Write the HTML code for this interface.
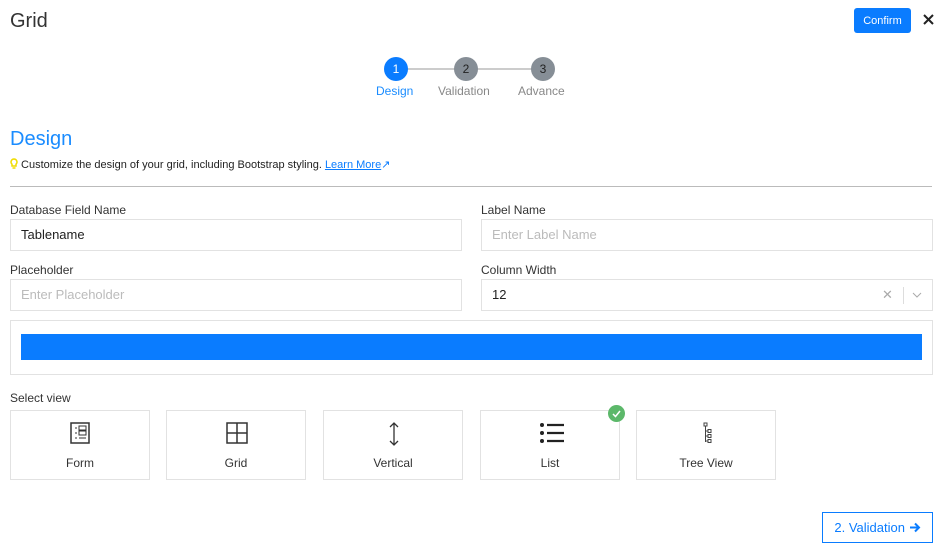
<!DOCTYPE html>
<html><head><meta charset="utf-8"><style>
*{box-sizing:border-box;margin:0;padding:0}
body{width:942px;height:551px;background:#fff;font-family:"Liberation Sans",sans-serif;color:#222;position:relative;overflow:hidden}
.a{position:absolute}
.lbl{font-size:12px;color:#333}
.inp{position:absolute;border:1px solid #e2e2e2;height:32px;font-size:13px;padding-left:10px;line-height:30px}
.ph{color:#bbb}
.circ{position:absolute;width:24px;height:24px;border-radius:50%;color:#fff;font-size:12px;text-align:center;line-height:24px;top:57px}
.step{position:absolute;top:84px;font-size:12px;color:#888}
.card{position:absolute;top:410px;width:140px;height:70px;border:1px solid #e2e2e2;text-align:center;font-size:12px;color:#333}
.card svg{position:absolute;left:58px;top:10px}
.card span{position:absolute;left:0;right:0;top:45px}
</style></head><body>
<div class="a" style="left:10px;top:10px;font-size:20px;color:#333">Grid</div>
<div class="a" style="left:854px;top:8px;width:57px;height:25px;background:#0a7cff;border-radius:3px;color:#fff;font-size:11px;text-align:center;line-height:26px">Confirm</div>
<svg class="a" style="left:923px;top:14px" width="11" height="11"><path d="M1 1L10 10M10 1L1 10" stroke="#222" stroke-width="2"/></svg>

<div class="a" style="left:406px;top:68px;width:126px;height:2px;background:#ccc"></div>
<div class="circ" style="left:384px;background:#0a7cff">1</div>
<div class="circ" style="left:454px;background:#868e96;color:#222">2</div>
<div class="circ" style="left:531px;background:#868e96;color:#222">3</div>
<div class="step" style="left:376px;color:#1a8cff">Design</div>
<div class="step" style="left:438px">Validation</div>
<div class="step" style="left:518px">Advance</div>

<div class="a" style="left:10px;top:128px;font-size:20px;color:#1a8cff">Design</div>
<div class="a" style="left:10px;top:158px;font-size:11px;color:#222"><svg width="8" height="11" style="vertical-align:-1px"><path d="M4 1a3 3 0 0 0-2 5.2V8h4V6.2A3 3 0 0 0 4 1zM2.5 10h3" stroke="#f0dc00" stroke-width="1.5" fill="none"/></svg> Customize the design of your grid, including Bootstrap styling. <span style="color:#0a7cff;text-decoration:underline">Learn More</span><span style="color:#0a7cff">&#8599;</span></div>
<div class="a" style="left:10px;top:186px;width:922px;height:1px;background:#bbb"></div>

<div class="a lbl" style="left:10px;top:203px">Database Field Name</div>
<div class="a lbl" style="left:481px;top:203px">Label Name</div>
<div class="inp" style="left:10px;top:219px;width:452px;color:#222">Tablename</div>
<div class="inp ph" style="left:481px;top:219px;width:452px">Enter Label Name</div>
<div class="a lbl" style="left:10px;top:263px">Placeholder</div>
<div class="a lbl" style="left:481px;top:263px">Column Width</div>
<div class="inp ph" style="left:10px;top:279px;width:452px">Enter Placeholder</div>
<div class="inp" style="left:481px;top:279px;width:452px;color:#222">12
<span class="a" style="left:400px;top:0;color:#aaa;font-size:13px">&#x2715;</span>
<span class="a" style="left:421px;top:7px;width:1px;height:17px;background:#ddd"></span>
<svg class="a" style="left:430px;top:12px" width="10" height="7"><path d="M1 1L5 5L9 1" stroke="#aaa" fill="none"/></svg></div>

<div class="a" style="left:10px;top:320px;width:923px;height:55px;border:1px solid #e2e2e2"></div>
<div class="a" style="left:21px;top:334px;width:901px;height:26px;background:#0a7cff"></div>

<div class="a lbl" style="left:10px;top:391px">Select view</div>
<div class="card" style="left:10px"><svg width="22" height="24"><rect x="2" y="2" width="18" height="20" fill="none" stroke="#333" stroke-width="1.5"/><path d="M6 7h2M10 5h7v4h-7zM6 12h2M10 10h7v4h-7zM6 17h2M10 17h7" stroke="#333" fill="none"/></svg><span>Form</span></div>
<div class="card" style="left:166px"><svg width="24" height="24"><rect x="2" y="2" width="20" height="20" fill="none" stroke="#333" stroke-width="1.5"/><path d="M12 2v20M2 12h20" stroke="#333" stroke-width="1.5"/></svg><span>Grid</span></div>
<div class="card" style="left:323px"><svg width="24" height="26"><path d="M12 2v22M8 6l4-4 4 4M8 20l4 4 4-4" stroke="#333" fill="none" stroke-width="1.3"/></svg><span>Vertical</span></div>
<div class="card" style="left:480px"><svg width="26" height="24"><circle cx="3" cy="4" r="2" fill="#222"/><circle cx="3" cy="12" r="2" fill="#222"/><circle cx="3" cy="20" r="2" fill="#222"/><path d="M8 4h17M8 12h17M8 20h17" stroke="#222" stroke-width="2.2"/></svg><span>List</span></div>
<div class="a" style="left:608px;top:405px;width:17px;height:17px;border-radius:50%;background:#5cb86a"><svg width="17" height="17"><path d="M5 9l2.5 2.5L12 6" stroke="#fff" stroke-width="1.5" fill="none"/></svg></div>
<div class="card" style="left:636px"><svg width="24" height="24"><rect x="9" y="2" width="3" height="3" fill="none" stroke="#444"/><path d="M10.5 5v16M10.5 10h3M10.5 15h3M10.5 20h3" stroke="#444"/><rect x="13" y="8.5" width="3" height="3" fill="none" stroke="#444"/><rect x="13" y="13.5" width="3" height="3" fill="none" stroke="#444"/><rect x="13" y="18.5" width="3" height="3" fill="none" stroke="#444"/></svg><span>Tree View</span></div>

<div class="a" style="left:822px;top:512px;width:111px;height:31px;border:1px solid #0a7cff;color:#0a7cff;font-size:13px;text-align:center;line-height:29px">2. Validation <svg width="12" height="11" style="vertical-align:-1px"><path d="M1 5.5h9M6 1.5l4 4-4 4" stroke="#0a7cff" stroke-width="2" fill="none"/></svg></div>
</body></html>
